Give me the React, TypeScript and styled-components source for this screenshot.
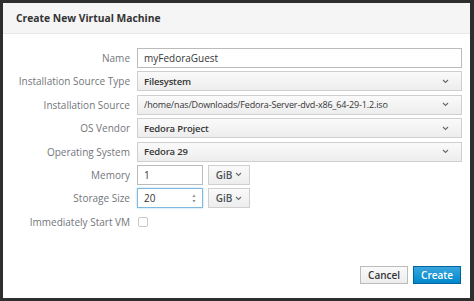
import styled, { createGlobalStyle } from 'styled-components'

const GlobalStyle = createGlobalStyle`
	html, body {
		margin: 0;
		padding: 0;
		background: #2e2e2e;
	}
	body {
		font-family: 'Open Sans', 'Liberation Sans', sans-serif;
	}
`

type Field = {
	label: string
	kind: 'text' | 'select'
	value: string
	plain?: boolean
}

const fields: Field[] = [
	{ label: 'Name', kind: 'text', value: 'myFedoraGuest' },
	{ label: 'Installation Source Type', kind: 'select', value: 'Filesystem' },
	{
		label: 'Installation Source',
		kind: 'select',
		value: '/home/nas/Downloads/Fedora-Server-dvd-x86_64-29-1.2.iso',
		plain: true,
	},
	{ label: 'OS Vendor', kind: 'select', value: 'Fedora Project' },
	{ label: 'Operating System', kind: 'select', value: 'Fedora 29' },
]

function Chevron() {
	return (
		<svg width='7' height='5' viewBox='0 0 7 5'>
			<polyline points='1,1 3.5,3.5 6,1' fill='none' stroke='#6a6a6a' strokeWidth='1.1' />
		</svg>
	)
}

function Spinner() {
	return (
		<svg width='4' height='9' viewBox='0 0 4 9'>
			<polygon points='2,0.5 3.5,3 0.5,3' fill='#8a8a8a' />
			<polygon points='2,8.5 3.5,6 0.5,6' fill='#8a8a8a' />
		</svg>
	)
}

function App() {
	return (
		<Frame>
			<GlobalStyle />
			<Dialog>
				<Header>
					<h1>Create New Virtual Machine</h1>
				</Header>
				<Form>
					{fields.map((f) => (
						<Row key={f.label}>
							<Label>{f.label}</Label>
							{f.kind === 'text' ? (
								<TextInput>{f.value}</TextInput>
							) : (
								<Select $plain={f.plain}>
									<span>{f.value}</span>
									<Chevron />
								</Select>
							)}
						</Row>
					))}
					<Row>
						<Label>Memory</Label>
						<SizeGroup>
							<TextInput $width={66}>1</TextInput>
							<UnitButton>
								GiB <Chevron />
							</UnitButton>
						</SizeGroup>
					</Row>
					<Row>
						<Label>Storage Size</Label>
						<SizeGroup>
							<TextInput $width={66} $focused>
								<span>20</span>
								<Spinner />
							</TextInput>
							<UnitButton>
								GiB <Chevron />
							</UnitButton>
						</SizeGroup>
					</Row>
					<Row>
						<Label>Immediately Start VM</Label>
						<Checkbox />
					</Row>
				</Form>
				<Footer>
					<Button>Cancel</Button>
					<Button $primary>Create</Button>
				</Footer>
			</Dialog>
		</Frame>
	)
}

const Frame = styled.div`
	box-sizing: border-box;
	height: 301px;
	width: 474px;
	padding: 3px 4px 3px 3px;
	background: #2e2e2e;
`

const Dialog = styled.div`
	height: 100%;
	background: #fff;
	display: flex;
	flex-direction: column;
`

const Header = styled.div`
	height: 30px;
	background: #f5f5f5;
	border-bottom: 1px solid #e8e8e8;
	display: flex;
	align-items: center;
	padding-left: 13px;

	h1 {
		margin: 0;
		font-size: 10.3px;
		font-weight: 700;
		color: #333;
	}
`

const Form = styled.div`
	display: flex;
	flex-direction: column;
	gap: 3.4px;
	padding: 14px 8px 0 0;
	flex: 1;
`

const Row = styled.div`
	display: grid;
	grid-template-columns: 127px 1fr;
	column-gap: 7px;
	align-items: center;
	height: 20px;
`

const Label = styled.div`
	text-align: right;
	font-size: 10px;
	color: #72767b;
	white-space: nowrap;
`

const fieldBase = `
	box-sizing: border-box;
	height: 20px;
	display: flex;
	align-items: center;
	justify-content: space-between;
	padding: 0 6px;
	font-size: 10px;
	color: #363636;
	white-space: nowrap;
	overflow: hidden;
`

const TextInput = styled.div<{ $width?: number; $focused?: boolean }>`
	${fieldBase}
	width: ${(p) => (p.$width ? `${p.$width}px` : 'auto')};
	background: #fff;
	border: 1px solid ${(p) => (p.$focused ? '#7fb8e0' : '#bbb')};
	box-shadow: ${(p) => (p.$focused ? '0 0 2px rgba(0, 136, 206, 0.35)' : 'none')};
`

const Select = styled.div<{ $plain?: boolean }>`
	${fieldBase}
	font-size: ${(p) => (p.$plain ? '9px' : '9.5px')};
	letter-spacing: -0.15px;
	font-weight: ${(p) => (p.$plain ? 400 : 600)};
	background: linear-gradient(#fafafa, #ededed);
	border: 1px solid #cfcfcf;
	padding-right: 12px;

	span {
		overflow: hidden;
	}
`

const SizeGroup = styled.div`
	display: flex;
	gap: 5px;
`

const UnitButton = styled.div`
	${fieldBase}
	width: 42px;
	justify-content: center;
	gap: 3px;
	font-weight: 600;
	color: #4d5258;
	background: linear-gradient(#fafafa, #ededed);
	border: 1px solid #cfcfcf;
`

const Checkbox = styled.div`
	box-sizing: border-box;
	width: 10px;
	height: 10px;
	margin-left: 1px;
	border: 1px solid #c8c8c8;
	border-radius: 2px;
	background: #fff;
`

const Footer = styled.div`
	display: flex;
	justify-content: flex-end;
	gap: 5px;
	padding: 0 9px 14px 0;
`

const Button = styled.div<{ $primary?: boolean }>`
	box-sizing: border-box;
	height: 18px;
	padding: 0 7px;
	display: flex;
	align-items: center;
	justify-content: center;
	font-size: 10px;
	font-weight: 600;
	color: ${(p) => (p.$primary ? '#fff' : '#363636')};
	background: ${(p) => (p.$primary ? 'linear-gradient(#39a5dc, #0088ce)' : 'linear-gradient(#fafafa, #ededed)')};
	border: 1px solid ${(p) => (p.$primary ? '#00659c' : '#bbb')};
`

export default App
